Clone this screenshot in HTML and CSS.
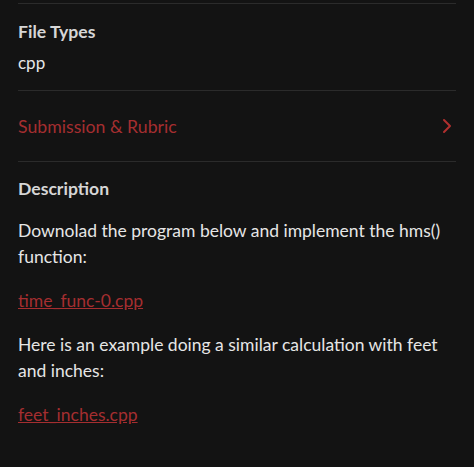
FILE: index.html
```html
<!DOCTYPE html>
<html lang="en">
<head>
    <meta charset="UTF-8">
    <meta name="viewport" content="width=device-width, initial-scale=1.0">
    <title>Assignment Details</title>
    <link rel="stylesheet" href="styles.css">
</head>
<body>
    <div class="details">
        <div class="divider"></div>

        <div class="section">
            <div class="section-title">File Types</div>
            <div class="section-value">cpp</div>
        </div>

        <div class="divider"></div>

        <a class="nav-row" href="#">
            <span>Submission &amp; Rubric</span>
            <svg class="chevron" width="10" height="16" viewBox="0 0 10 16">
                <path d="M2 2 L8 8 L2 14" fill="none" stroke="currentColor" stroke-width="2" stroke-linecap="round" stroke-linejoin="round"/>
            </svg>
        </a>

        <div class="divider"></div>

        <div class="section description">
            <div class="section-title">Description</div>
            <p>Downolad the program below and implement the hms() function:</p>
            <p><a href="#">time_func-0.cpp</a></p>
            <p>Here is an example doing a similar calculation with feet and inches:</p>
            <p><a href="#">feet_inches.cpp</a></p>
        </div>
    </div>
</body>
</html>
```

FILE: styles.css
```css
body {
    font-family: Lato, "Open Sans", sans-serif;
    background-color: #131313;
    color: #e6e6e6;
    margin: 0;
    padding: 3px 0 0;
}
.details {
    padding: 0 18px;
}
.divider {
    height: 1px;
    background-color: #2b2b2b;
}
.section {
    padding: 17px 0 15px;
}
.section-title {
    font-size: 17.6px;
    font-weight: bold;
    line-height: 22px;
    color: #d6d6d6;
}
.section-value {
    font-size: 17px;
    line-height: 24px;
    margin-top: 8px;
}
.nav-row {
    display: flex;
    align-items: center;
    justify-content: space-between;
    height: 70px;
    font-size: 17.7px;
    color: #a52e30;
    text-decoration: none;
}
.chevron {
    color: #b0302f;
    margin-right: 4px;
}
.description {
    padding-top: 16px;
}
.description p {
    font-size: 17.5px;
    line-height: 26px;
    margin: 18px 0 0;
}
.description a {
    color: #a52e30;
}
```
